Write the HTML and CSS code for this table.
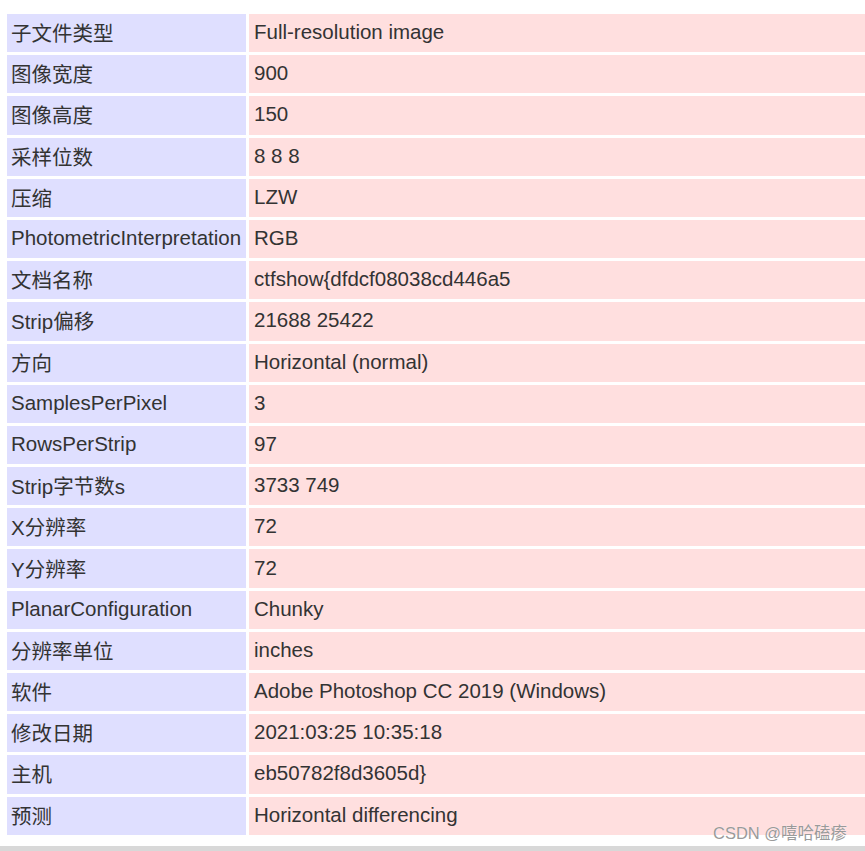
FILE: index.html
```html
<!DOCTYPE html>
<html>
<head>
<meta charset="utf-8">
<link rel="stylesheet" href="styles.css">
</head>
<body>
<div class="page">
  <table class="exif">
    <tr><td class="k">子文件类型</td><td class="v">Full-resolution image</td></tr>
    <tr><td class="k">图像宽度</td><td class="v">900</td></tr>
    <tr><td class="k">图像高度</td><td class="v">150</td></tr>
    <tr><td class="k">采样位数</td><td class="v">8 8 8</td></tr>
    <tr><td class="k">压缩</td><td class="v">LZW</td></tr>
    <tr><td class="k">PhotometricInterpretation</td><td class="v">RGB</td></tr>
    <tr><td class="k">文档名称</td><td class="v">ctfshow{dfdcf08038cd446a5</td></tr>
    <tr><td class="k">Strip偏移</td><td class="v">21688 25422</td></tr>
    <tr><td class="k">方向</td><td class="v">Horizontal (normal)</td></tr>
    <tr><td class="k">SamplesPerPixel</td><td class="v">3</td></tr>
    <tr><td class="k">RowsPerStrip</td><td class="v">97</td></tr>
    <tr><td class="k">Strip字节数s</td><td class="v">3733 749</td></tr>
    <tr><td class="k">X分辨率</td><td class="v">72</td></tr>
    <tr><td class="k">Y分辨率</td><td class="v">72</td></tr>
    <tr><td class="k">PlanarConfiguration</td><td class="v">Chunky</td></tr>
    <tr><td class="k">分辨率单位</td><td class="v">inches</td></tr>
    <tr><td class="k">软件</td><td class="v">Adobe Photoshop CC 2019 (Windows)</td></tr>
    <tr><td class="k">修改日期</td><td class="v">2021:03:25 10:35:18</td></tr>
    <tr><td class="k">主机</td><td class="v">eb50782f8d3605d}</td></tr>
    <tr><td class="k">预测</td><td class="v">Horizontal differencing</td></tr>
  </table>
  <div class="bottom-bar"></div>
  <div class="watermark">CSDN @嘻哈磕瘆</div>
</div>
</body>
</html>
```

FILE: styles.css
```css
html, body {
  margin: 0;
  padding: 0;
  background: #fff;
  overflow: hidden;
}
.page {
  position: relative;
  width: 865px;
  height: 851px;
  overflow: hidden;
  padding-top: 11px;
  box-sizing: border-box;
  font-family: "Liberation Sans", Arial, "Noto Sans CJK SC", sans-serif;
}
.exif {
  border-collapse: separate;
  border-spacing: 3px;
  margin-left: 4px;
  width: 880px;
  table-layout: fixed;
}
.exif td {
  height: 38.2px;
  padding: 0 0 2px 4px;
  font-size: 20.5px;
  color: #333;
  white-space: nowrap;
  box-sizing: border-box;
  vertical-align: middle;
}
.exif td.k {
  width: 239px;
  background: #dfdfff;
}
.exif td.v {
  background: #ffdfdf;
  padding-left: 5px;
}
.bottom-bar {
  position: absolute;
  left: 0;
  right: 0;
  bottom: 0;
  height: 5px;
  background: #d8d8d8;
}
.watermark {
  position: absolute;
  left: 713px;
  top: 820px;
  font-size: 16.5px;
  color: #9a9a9a;
  text-shadow: 0 0 1px #fff;
  font-family: "Liberation Sans", Arial, "Noto Sans CJK SC", sans-serif;
}
```
